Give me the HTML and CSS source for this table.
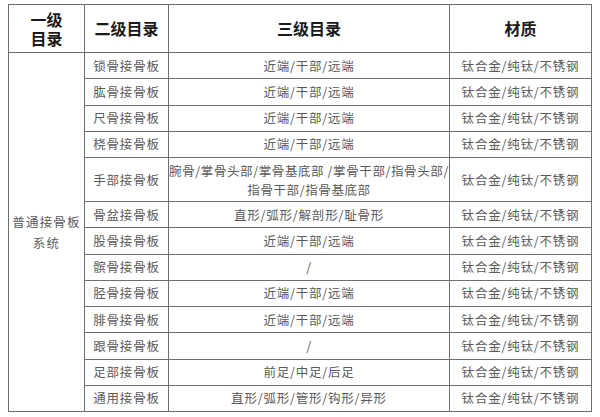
FILE: index.html
```html
<!DOCTYPE html>
<html lang="zh-CN">
<head>
<meta charset="utf-8">
<title>普通接骨板系统</title>
<link rel="stylesheet" href="styles.css">
</head>
<body>
<table class="spec">
  <colgroup>
    <col class="c1"><col class="c2"><col class="c3"><col class="c4">
  </colgroup>
  <thead>
    <tr class="head">
      <th class="narrow">一级<br>目录</th>
      <th>二级目录</th>
      <th>三级目录</th>
      <th>材质</th>
    </tr>
  </thead>
  <tbody>
    <tr>
      <td class="group" rowspan="13">普通接骨板<br>系统</td>
      <td>锁骨接骨板</td><td>近端/干部/远端</td><td>钛合金/纯钛/不锈钢</td>
    </tr>
    <tr><td>肱骨接骨板</td><td>近端/干部/远端</td><td>钛合金/纯钛/不锈钢</td></tr>
    <tr><td>尺骨接骨板</td><td>近端/干部/远端</td><td>钛合金/纯钛/不锈钢</td></tr>
    <tr><td>桡骨接骨板</td><td>近端/干部/远端</td><td>钛合金/纯钛/不锈钢</td></tr>
    <tr class="tall"><td>手部接骨板</td><td class="multi">腕骨/掌骨头部/掌骨基底部 /掌骨干部/指骨头部/<br>指骨干部/指骨基底部</td><td>钛合金/纯钛/不锈钢</td></tr>
    <tr><td>骨盆接骨板</td><td>直形/弧形/解剖形/耻骨形</td><td>钛合金/纯钛/不锈钢</td></tr>
    <tr><td>股骨接骨板</td><td>近端/干部/远端</td><td>钛合金/纯钛/不锈钢</td></tr>
    <tr><td>髌骨接骨板</td><td>/</td><td>钛合金/纯钛/不锈钢</td></tr>
    <tr><td>胫骨接骨板</td><td>近端/干部/远端</td><td>钛合金/纯钛/不锈钢</td></tr>
    <tr><td>腓骨接骨板</td><td>近端/干部/远端</td><td>钛合金/纯钛/不锈钢</td></tr>
    <tr><td>跟骨接骨板</td><td>/</td><td>钛合金/纯钛/不锈钢</td></tr>
    <tr><td>足部接骨板</td><td>前足/中足/后足</td><td>钛合金/纯钛/不锈钢</td></tr>
    <tr><td>通用接骨板</td><td>直形/弧形/管形/钩形/异形</td><td>钛合金/纯钛/不锈钢</td></tr>
  </tbody>
</table>
<p class="after">产品按照材质及结构的不同分为普通接骨板系统与锁定接骨板系统两类产品</p>
</body>
</html>
```

FILE: styles.css
```css
html {
  overflow: hidden;
}

body {
  margin: 4px 0 0 8px;
  background: #ffffff;
  font-family: "Noto Sans CJK SC", "Noto Sans", sans-serif;
}

.spec {
  border-collapse: collapse;
  table-layout: fixed;
  width: 583px;
}

.c1 { width: 76px; }
.c2 { width: 84px; }
.c3 { width: 281px; }
.c4 { width: 142px; }

.spec th,
.spec td {
  border: 1px solid #6f6f6f;
  padding: 0;
  text-align: center;
  vertical-align: middle;
}

.spec th {
  height: 47px;
  font-size: 16px;
  font-weight: 700;
  color: #1a1a1a;
  line-height: 19px;
}

.spec td {
  height: 25.25px;
  font-size: 12.5px;
  line-height: 16px;
  letter-spacing: 0.8px;
  color: #5a5a5a;
}

.spec tr.tall td {
  height: 43px;
}

.spec td.multi {
  line-height: 19px;
  letter-spacing: 0.6px;
  white-space: nowrap;
}

.spec td.group {
  line-height: 21px;
  letter-spacing: 1.2px;
}

.after {
  margin: 5px 0 0 48px;
  font-size: 13px;
  letter-spacing: 3px;
  color: #a0a0a0;
}
```
